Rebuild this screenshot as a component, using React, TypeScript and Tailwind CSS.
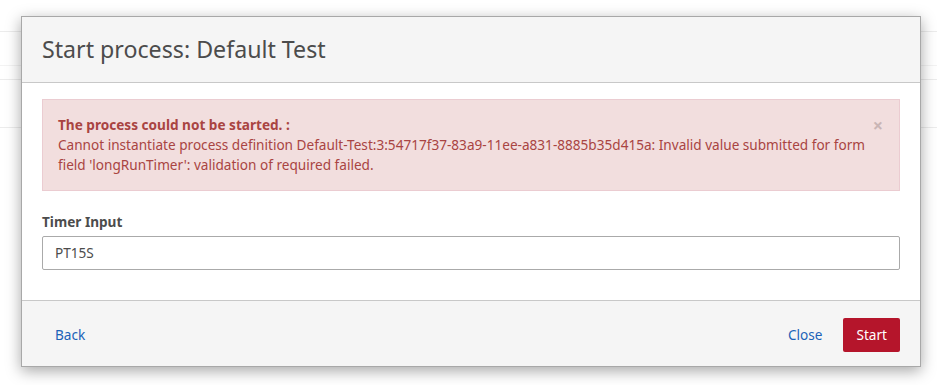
import React from 'react';

const font = { fontFamily: '"Noto Sans", "Liberation Sans", sans-serif' };

const App: React.FC = () => {
  return (
    <div className="relative h-[385px] w-[937px] overflow-hidden bg-white" style={font}>
      {/* page behind the dialog */}
      <div className="flex flex-col">
        <div className="h-[32px] border-b border-[#ececec]"></div>
        <div className="h-[34px] border-b border-[#f3f3f3]"></div>
        <div className="h-[14px] border-b border-[#ececec]"></div>
        <div className="h-[48px] border-b border-[#ececec]"></div>
      </div>

      <div className="absolute left-[21px] top-[16px] flex w-[900px] flex-col border border-[#a8a8a8] bg-white shadow-[0_4px_14px_rgba(0,0,0,0.35)]">
        <div className="flex h-[66px] items-center border-b border-[#c8c8c8] bg-[#f5f5f5] px-[20px]">
          <h2 className="text-[23.2px] text-[#4c4c4c]">Start process: Default Test</h2>
        </div>

        <div className="flex flex-col px-[20px] pt-[16px] pb-[30px]">
          <div className="relative border border-[#ebccd1] bg-[#f2dede] px-[15px] pt-[15px] pb-[15px] text-[13.6px] leading-[20px] text-[#a94442]">
            <button className="absolute right-[16px] top-[15px] text-[18px] leading-[20px] font-bold text-[#c9b5b5]">×</button>
            <div className="font-bold">The process could not be started. :</div>
            <div className="pr-[10px]">
              Cannot instantiate process definition Default-Test:3:54717f37-83a9-11ee-a831-8885b35d415a: Invalid value submitted for form field 'longRunTimer': validation of required failed.
            </div>
          </div>

          <label className="mt-[21px] text-[13.6px] font-bold text-[#4c4c4c]">Timer Input</label>
          <div className="mt-[4px] flex h-[34px] items-center rounded-[2px] border border-[#aaaaaa] px-[12px] text-[13.6px] text-[#4c4c4c]">
            PT15S
          </div>
        </div>

        <div className="flex h-[66px] items-center border-t border-[#c8c8c8] bg-[#f5f5f5] px-[20px] pt-[2px] text-[13.6px]">
          <button className="px-[13px] text-[#1b62b8]">Back</button>
          <div className="flex-1"></div>
          <button className="px-[13px] text-[#1b62b8]">Close</button>
          <button className="ml-[8px] h-[34px] rounded-[2px] bg-[#b5152b] px-[13px] text-white">Start</button>
        </div>
      </div>
    </div>
  );
};

export default App;
